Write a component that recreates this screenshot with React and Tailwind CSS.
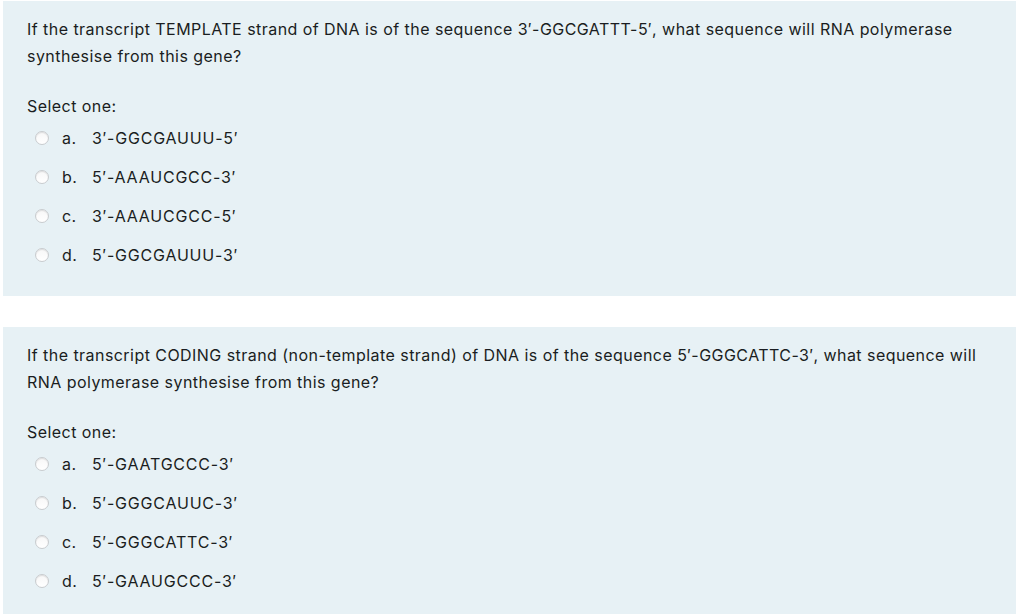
const questions = [
  {
    text: "If the transcript TEMPLATE strand of DNA is of the sequence 3′-GGCGATTT-5′, what sequence will RNA polymerase synthesise from this gene?",
    options: ["3′-GGCGAUUU-5′", "5′-AAAUCGCC-3′", "3′-AAAUCGCC-5′", "5′-GGCGAUUU-3′"],
  },
  {
    text: "If the transcript CODING strand (non-template strand) of DNA is of the sequence 5′-GGGCATTC-3′, what sequence will RNA polymerase synthesise from this gene?",
    options: ["5′-GAATGCCC-3′", "5′-GGGCAUUC-3′", "5′-GGGCATTC-3′", "5′-GAAUGCCC-3′"],
  },
];

const letters = ["a.", "b.", "c.", "d."];

const Radio = () => (
  <span className="w-[14px] h-[14px] rounded-full border border-[#c9cccf] bg-gradient-to-b from-[#f7f7f7] to-white shadow-[inset_0_1px_1px_rgba(0,0,0,0.1)] shrink-0" />
);

const Question = ({ q }) => (
  <div className="bg-[#e7f1f5] pl-6 pr-4 pt-[15px] pb-[28px]">
    <p className="leading-[27px]">{q.text}</p>
    <p className="mt-[23px] leading-[27px]">Select one:</p>
    <div className="flex flex-col gap-[12px] mt-[4px]">
      {q.options.map((opt, i) => (
        <label key={opt} className="flex items-center h-[27px] pl-[8px]">
          <Radio />
          <span className="ml-[13px] w-[30px]">{letters[i]}</span>
          <span className="tracking-[0.8px]">{opt}</span>
        </label>
      ))}
    </div>
  </div>
);

export default function App() {
  return (
    <div
      className="bg-white w-[1024px] h-[614px] overflow-hidden pl-[3px] pr-2 pt-px text-[16px] tracking-[0.45px] text-[#1a1d21]"
      style={{ fontFamily: "Inter, 'Noto Sans', sans-serif" }}
    >
      <div className="flex flex-col gap-[31px]">
        {questions.map((q, i) => (
          <Question key={i} q={q} />
        ))}
      </div>
    </div>
  );
}
